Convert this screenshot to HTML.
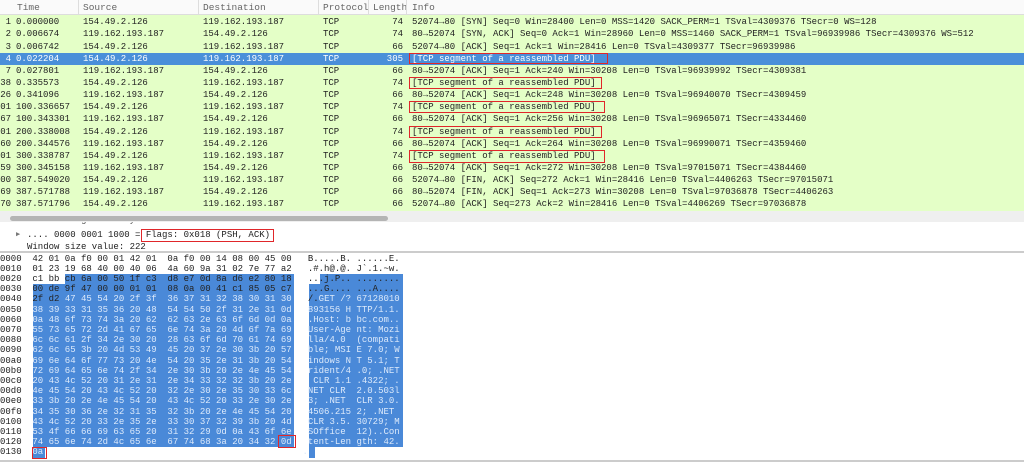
<!DOCTYPE html>
<html><head><meta charset="utf-8"><style>
*{margin:0;padding:0;box-sizing:border-box}
body{width:1024px;height:462px;overflow:hidden;background:#fff;font-family:"Liberation Mono","DejaVu Sans Mono",monospace;font-size:9px;color:#222;position:relative}
.a{position:absolute;white-space:pre}
.hdr{position:absolute;left:0;top:0;width:1024px;height:15px;background:#fafafa;border-bottom:1px solid #ddd}
.hdr span{position:absolute;top:2px;color:#666;font-size:9.5px}
.hdr i{position:absolute;top:0;width:1px;height:15px;background:#ddd}
.green{position:absolute;left:0;top:15px;width:1024px;height:196px;background:#e4ffc7}
.row{position:absolute;left:0;width:1024px;height:12.15px;line-height:12.15px}
.row span{position:absolute;top:0;white-space:pre}
.sel{background:#4a8fd9;color:#fff}
.red{position:absolute;border:1.5px solid #e0262a}
.hex{position:absolute;left:0;top:253.6px;line-height:10.2px;white-space:pre;color:#222}
.b{position:absolute;background:#4a89d8;height:10.2px}
.lt{color:#dbe9fb}
</style></head><body>
<div class="hdr">
<span style="left:17px">Time</span><i style="left:78px"></i>
<span style="left:83px">Source</span><i style="left:198px"></i>
<span style="left:203px">Destination</span><i style="left:318px"></i>
<span style="left:323px">Protocol</span><i style="left:368px"></i>
<span style="left:373px">Length</span><i style="left:406px"></i>
<span style="left:412px">Info</span>
</div>
<div class="green"></div>

<div class="row" style="top:16.2px"><span style="right:1013px">1</span><span style="left:16px">0.000000</span><span style="left:83px">154.49.2.126</span><span style="left:203px">119.162.193.187</span><span style="left:323px">TCP</span><span style="right:621px">74</span><span style="left:412px">52074→80 [SYN] Seq=0 Win=28400 Len=0 MSS=1420 SACK_PERM=1 TSval=4309376 TSecr=0 WS=128</span></div>
<div class="row" style="top:28.35px"><span style="right:1013px">2</span><span style="left:16px">0.006674</span><span style="left:83px">119.162.193.187</span><span style="left:203px">154.49.2.126</span><span style="left:323px">TCP</span><span style="right:621px">74</span><span style="left:412px">80→52074 [SYN, ACK] Seq=0 Ack=1 Win=28960 Len=0 MSS=1460 SACK_PERM=1 TSval=96939986 TSecr=4309376 WS=512</span></div>
<div class="row" style="top:40.5px"><span style="right:1013px">3</span><span style="left:16px">0.006742</span><span style="left:83px">154.49.2.126</span><span style="left:203px">119.162.193.187</span><span style="left:323px">TCP</span><span style="right:621px">66</span><span style="left:412px">52074→80 [ACK] Seq=1 Ack=1 Win=28416 Len=0 TSval=4309377 TSecr=96939986</span></div>
<div class="row sel" style="top:52.65px"><span style="right:1013px">4</span><span style="left:16px">0.022204</span><span style="left:83px">154.49.2.126</span><span style="left:203px">119.162.193.187</span><span style="left:323px">TCP</span><span style="right:621px">305</span><span style="left:412px">[TCP segment of a reassembled PDU]</span></div>
<div class="row" style="top:64.8px"><span style="right:1013px">7</span><span style="left:16px">0.027801</span><span style="left:83px">119.162.193.187</span><span style="left:203px">154.49.2.126</span><span style="left:323px">TCP</span><span style="right:621px">66</span><span style="left:412px">80→52074 [ACK] Seq=1 Ack=240 Win=30208 Len=0 TSval=96939992 TSecr=4309381</span></div>
<div class="row" style="top:76.95px"><span style="right:1013px">38</span><span style="left:16px">0.335573</span><span style="left:83px">154.49.2.126</span><span style="left:203px">119.162.193.187</span><span style="left:323px">TCP</span><span style="right:621px">74</span><span style="left:412px">[TCP segment of a reassembled PDU]</span></div>
<div class="row" style="top:89.1px"><span style="right:1013px">26</span><span style="left:16px">0.341096</span><span style="left:83px">119.162.193.187</span><span style="left:203px">154.49.2.126</span><span style="left:323px">TCP</span><span style="right:621px">66</span><span style="left:412px">80→52074 [ACK] Seq=1 Ack=248 Win=30208 Len=0 TSval=96940070 TSecr=4309459</span></div>
<div class="row" style="top:101.25px"><span style="right:1013px">01</span><span style="left:16px">100.336657</span><span style="left:83px">154.49.2.126</span><span style="left:203px">119.162.193.187</span><span style="left:323px">TCP</span><span style="right:621px">74</span><span style="left:412px">[TCP segment of a reassembled PDU]</span></div>
<div class="row" style="top:113.4px"><span style="right:1013px">67</span><span style="left:16px">100.343301</span><span style="left:83px">119.162.193.187</span><span style="left:203px">154.49.2.126</span><span style="left:323px">TCP</span><span style="right:621px">66</span><span style="left:412px">80→52074 [ACK] Seq=1 Ack=256 Win=30208 Len=0 TSval=96965071 TSecr=4334460</span></div>
<div class="row" style="top:125.55px"><span style="right:1013px">01</span><span style="left:16px">200.338008</span><span style="left:83px">154.49.2.126</span><span style="left:203px">119.162.193.187</span><span style="left:323px">TCP</span><span style="right:621px">74</span><span style="left:412px">[TCP segment of a reassembled PDU]</span></div>
<div class="row" style="top:137.7px"><span style="right:1013px">60</span><span style="left:16px">200.344576</span><span style="left:83px">119.162.193.187</span><span style="left:203px">154.49.2.126</span><span style="left:323px">TCP</span><span style="right:621px">66</span><span style="left:412px">80→52074 [ACK] Seq=1 Ack=264 Win=30208 Len=0 TSval=96990071 TSecr=4359460</span></div>
<div class="row" style="top:149.85px"><span style="right:1013px">01</span><span style="left:16px">300.338787</span><span style="left:83px">154.49.2.126</span><span style="left:203px">119.162.193.187</span><span style="left:323px">TCP</span><span style="right:621px">74</span><span style="left:412px">[TCP segment of a reassembled PDU]</span></div>
<div class="row" style="top:162px"><span style="right:1013px">59</span><span style="left:16px">300.345158</span><span style="left:83px">119.162.193.187</span><span style="left:203px">154.49.2.126</span><span style="left:323px">TCP</span><span style="right:621px">66</span><span style="left:412px">80→52074 [ACK] Seq=1 Ack=272 Win=30208 Len=0 TSval=97015071 TSecr=4384460</span></div>
<div class="row" style="top:174.15px"><span style="right:1013px">00</span><span style="left:16px">387.549020</span><span style="left:83px">154.49.2.126</span><span style="left:203px">119.162.193.187</span><span style="left:323px">TCP</span><span style="right:621px">66</span><span style="left:412px">52074→80 [FIN, ACK] Seq=272 Ack=1 Win=28416 Len=0 TSval=4406263 TSecr=97015071</span></div>
<div class="row" style="top:186.3px"><span style="right:1013px">69</span><span style="left:16px">387.571788</span><span style="left:83px">119.162.193.187</span><span style="left:203px">154.49.2.126</span><span style="left:323px">TCP</span><span style="right:621px">66</span><span style="left:412px">80→52074 [FIN, ACK] Seq=1 Ack=273 Win=30208 Len=0 TSval=97036878 TSecr=4406263</span></div>
<div class="row" style="top:198.45px"><span style="right:1013px">70</span><span style="left:16px">387.571796</span><span style="left:83px">154.49.2.126</span><span style="left:203px">119.162.193.187</span><span style="left:323px">TCP</span><span style="right:621px">66</span><span style="left:412px">52074→80 [ACK] Seq=273 Ack=2 Win=28416 Len=0 TSval=4406269 TSecr=97036878</span></div>

<div class="red" style="left:409px;top:52.6px;width:199px;height:11px"></div>
<div class="red" style="left:409px;top:76.9px;width:193px;height:12px"></div>
<div class="red" style="left:409px;top:101.2px;width:196px;height:12px"></div>
<div class="red" style="left:409px;top:125.5px;width:193px;height:12px"></div>
<div class="red" style="left:409px;top:149.8px;width:196px;height:13px"></div>

<div class="a" style="left:0;top:211px;width:1024px;height:11px;background:#efefef"></div>
<div class="a" style="left:10px;top:216px;width:378px;height:5px;background:#b4b4b4;border-radius:3px"></div>

<div class="a" style="left:27px;top:222px;height:4px;overflow:hidden;width:200px"><div style="margin-top:-7px;color:#444">Header Length: 32 bytes</div></div>
<div class="a" style="left:16px;top:230px;font-size:7px;color:#777">▶</div>
<div class="a" style="left:27px;top:229px;line-height:12px">.... 0000 0001 1000 = Flags: 0x018 (PSH, ACK)</div>
<div class="a" style="left:27px;top:241px;line-height:12px">Window size value: 222</div>
<div class="red" style="left:141px;top:229px;width:133px;height:12.5px"></div>
<div class="a" style="left:0;top:251px;width:1024px;height:2px;background:#ccc"></div>

<div class="b" style="left:65px;top:274px;width:229px"></div>
<div class="b" style="left:320px;top:274px;width:83px"></div>
<div class="b" style="left:33px;top:284.2px;width:261px;height:163.2px"></div>
<div class="b" style="left:309px;top:284.2px;width:94px;height:163.2px"></div>
<div class="b" style="left:33px;top:447.4px;width:12px"></div>
<div class="b" style="left:309px;top:447.4px;width:6px"></div>

<div class="hex">0000  42 01 0a f0 00 01 42 01  0a f0 00 14 08 00 45 00   B.....B. ......E.
0010  01 23 19 68 40 00 40 06  4a 60 9a 31 02 7e 77 a2   .#.h@.@. J`.1.~w.
0020  c1 bb cb 6a 00 50 1f c3  d8 e7 0d 8a d6 e2 80 18   ...j.P.. ........
0030  00 de 9f 47 00 00 01 01  08 0a 00 41 c1 85 05 c7   ...G.... ...A....
0040  2f d2 <span class="lt">47 45 54 20 2f 3f  36 37 31 32 38 30 31 30</span>   /.<span class="lt">GET /? 67128010</span>
0050  <span class="lt">38 39 33 31 35 36 20 48  54 54 50 2f 31 2e 31 0d   893156 H TTP/1.1.</span>
0060  <span class="lt">0a 48 6f 73 74 3a 20 62  62 63 2e 63 6f 6d 0d 0a   .Host: b bc.com..</span>
0070  <span class="lt">55 73 65 72 2d 41 67 65  6e 74 3a 20 4d 6f 7a 69   User-Age nt: Mozi</span>
0080  <span class="lt">6c 6c 61 2f 34 2e 30 20  28 63 6f 6d 70 61 74 69   lla/4.0  (compati</span>
0090  <span class="lt">62 6c 65 3b 20 4d 53 49  45 20 37 2e 30 3b 20 57   ble; MSI E 7.0; W</span>
00a0  <span class="lt">69 6e 64 6f 77 73 20 4e  54 20 35 2e 31 3b 20 54   indows N T 5.1; T</span>
00b0  <span class="lt">72 69 64 65 6e 74 2f 34  2e 30 3b 20 2e 4e 45 54   rident/4 .0; .NET</span>
00c0  <span class="lt">20 43 4c 52 20 31 2e 31  2e 34 33 32 32 3b 20 2e    CLR 1.1 .4322; .</span>
00d0  <span class="lt">4e 45 54 20 43 4c 52 20  32 2e 30 2e 35 30 33 6c   NET CLR  2.0.503l</span>
00e0  <span class="lt">33 3b 20 2e 4e 45 54 20  43 4c 52 20 33 2e 30 2e   3; .NET  CLR 3.0.</span>
00f0  <span class="lt">34 35 30 36 2e 32 31 35  32 3b 20 2e 4e 45 54 20   4506.215 2; .NET </span>
0100  <span class="lt">43 4c 52 20 33 2e 35 2e  33 30 37 32 39 3b 20 4d   CLR 3.5. 30729; M</span>
0110  <span class="lt">53 4f 66 66 69 63 65 20  31 32 29 0d 0a 43 6f 6e   SOffice  12)..Con</span>
0120  <span class="lt">74 65 6e 74 2d 4c 65 6e  67 74 68 3a 20 34 32 0d   tent-Len gth: 42.</span>
0130  <span class="lt">0a</span>                                                <span class="lt">.</span></div>

<div class="red" style="left:278px;top:435px;width:18px;height:13px"></div>
<div class="red" style="left:32px;top:447px;width:15px;height:12px"></div>
<div class="a" style="left:0;top:460px;width:1024px;height:2px;background:#ccc"></div>
</body></html>
